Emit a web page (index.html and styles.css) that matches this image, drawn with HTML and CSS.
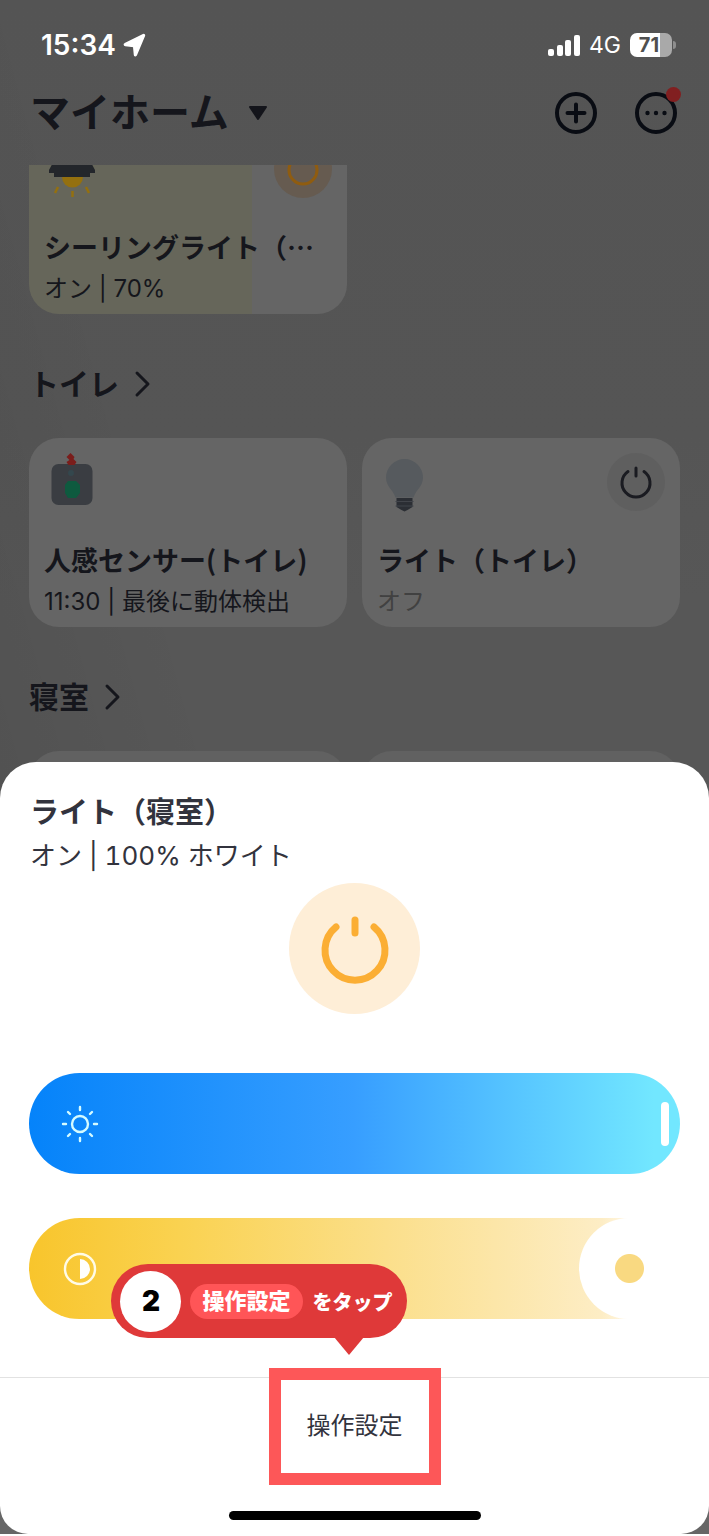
FILE: index.html
```html
<!DOCTYPE html>
<html lang="ja">
<head>
<meta charset="utf-8">
<meta name="viewport" content="width=device-width, initial-scale=1">
<title>マイホーム</title>
<link rel="stylesheet" href="styles.css">
</head>
<body>
<div class="screen">
  <div class="home">
    <div class="status-bar">
      <div class="status-left">
        <span class="clock">15:34</span>
        <svg class="location" viewBox="0 0 24 24" aria-hidden="true"><path d="M22.4 2.6 14.3 22c-.4 1-1.800.8-1.800-.3l-.8-8.200-8.400-1c-1.100-.1-1.300-1.400-.3-1.800L21.300 1.600c.7-.3 1.400.3 1.100 1z" fill="#fff" stroke="#fff" stroke-width="1.500" stroke-linejoin="round"/></svg>
      </div>
      <div class="status-right">
        <svg class="signal" viewBox="0 0 32 21" aria-hidden="true"><g fill="#fff"><rect x="0" y="14" width="6" height="7" rx="2"/><rect x="9" y="10" width="6" height="11" rx="2"/><rect x="17" y="5" width="6" height="16" rx="2"/><rect x="26" y="0" width="6" height="21" rx="2"/></g></svg>
        <span class="network">4G</span>
        <span class="battery"><span class="battery-level">71</span></span>
      </div>
    </div>

    <header class="header">
      <button class="home-switch" type="button">マイホーム
        <svg viewBox="0 0 20 16" aria-hidden="true"><path d="M2 2h16l-8 12z" fill="#14151b" stroke="#14151b" stroke-width="2" stroke-linejoin="round"/></svg>
      </button>
      <div class="header-actions">
        <button class="round-action" type="button" aria-label="追加">
          <svg viewBox="0 0 42 42" aria-hidden="true"><g fill="none" stroke="#090c13" stroke-width="4" stroke-linecap="round"><circle cx="21" cy="21" r="19"/><path d="M21 12.500v17M12.500 21h17"/></g></svg>
        </button>
        <button class="round-action" type="button" aria-label="メニュー">
          <svg viewBox="0 0 42 42" aria-hidden="true"><circle cx="21" cy="21" r="19" fill="none" stroke="#090c13" stroke-width="4"/><g fill="#090c13"><circle cx="12.500" cy="21" r="2.200"/><circle cx="21" cy="21" r="2.200"/><circle cx="29.500" cy="21" r="2.200"/></g></svg>
          <span class="badge"></span>
        </button>
      </div>
    </header>

    <main class="rooms">
      <div class="cards cards-scrolled">
        <article class="card card-on">
          <div class="card-top">
            <svg class="device" viewBox="0 0 56 60" aria-hidden="true"><path d="M19 4h18l14 26v3h-5v4H10v-4H5v-3z" fill="#23262b"/><path d="M18 37h21a10.500 10.500 0 0 1-21 0z" fill="#94700f"/><path d="m14 47-3 6M28.500 51v6M42 47l3 6" stroke="#94700f" stroke-width="2.500"/></svg>
            <button class="power power-on" type="button" aria-label="シーリングライトの電源"><svg viewBox="0 0 32 32" aria-hidden="true"><path d="M8 5.500a14 14 0 1 0 16 0M16 2v8"/></svg></button>
          </div>
          <h3 class="name">シーリングライト（…</h3>
          <p class="state">オン | 70%</p>
        </article>
      </div>

      <h2><button class="room" type="button">トイレ<svg viewBox="0 0 18 28" aria-hidden="true"><path d="m3 3 11 11L3 25"/></svg></button></h2>
      <div class="cards">
        <article class="card">
          <div class="card-top">
            <svg class="device" viewBox="0 0 56 60" aria-hidden="true"><rect x="7.500" y="11" width="41" height="41" rx="7" fill="#3a3d42"/><path d="m26.500 0 4 4-1 2 3 3-2 3h-6l-2-3 3-2-3-3z" fill="#7a1d1b"/><circle cx="27" cy="20" r="3" fill="#34474d"/><path d="M24 28h8l4 4v8l-4 5h-8l-3-5v-8z" fill="#0e5a3f"/></svg>
          </div>
          <h3 class="name">人感センサー(トイレ)</h3>
          <p class="state">11:30 | 最後に動体検出</p>
        </article>
        <article class="card">
          <div class="card-top">
            <svg class="device" viewBox="0 0 56 60" aria-hidden="true"><path d="M27.500 6A18.500 18.500 0 0 0 9 24.500c0 9 7 12 9.500 20h18c2.500-8 9.500-11 9.500-20A18.500 18.500 0 0 0 27.500 6z" fill="#565a5e"/><path d="M19.500 45h16v9l-5 3-3 1.500-3-1.500-5-3z" fill="#2b2e34"/><path d="M18.500 48.500h18M18.500 53h18" stroke="#41444a"/></svg>
            <button class="power" type="button" aria-label="ライト（トイレ）の電源"><svg viewBox="0 0 32 32" aria-hidden="true"><path d="M8 5.500a14 14 0 1 0 16 0M16 2v8"/></svg></button>
          </div>
          <h3 class="name">ライト（トイレ）</h3>
          <p class="state state-off">オフ</p>
        </article>
      </div>

      <h2><button class="room" type="button">寝室<svg viewBox="0 0 18 28" aria-hidden="true"><path d="m3 3 11 11L3 25"/></svg></button></h2>
      <div class="cards">
        <div class="card card-peek"></div>
        <div class="card card-peek"></div>
      </div>
    </main>
  </div>

  <section class="sheet" role="dialog" aria-labelledby="sheet-title">
    <h1 class="sheet-title" id="sheet-title">ライト（寝室）</h1>
    <p class="sheet-state">オン | 100% ホワイト</p>
    <button class="main-power" type="button" aria-label="電源">
      <svg viewBox="0 0 66 68" aria-hidden="true"><path d="M14 12A30 30 0 1 0 52 12M33 5v13"/></svg>
    </button>

    <div class="sliders">
      <label class="slider">
        <input class="range range-brightness" type="range" min="0" max="100" value="100" aria-label="明るさ">
        <svg class="slider-icon" viewBox="0 0 38 38" aria-hidden="true"><g fill="none" stroke="#d5fbff" stroke-width="2.400" stroke-linecap="round"><circle cx="19" cy="19" r="8"/><path d="M19 2v3M19 33v3M2 19h3M33 19h3M7 7l2 2M29 29l2 2M7 31l2-2M29 9l2-2"/></g></svg>
      </label>
      <label class="slider">
        <input class="range range-warmth" type="range" min="0" max="100" value="100" aria-label="色温度">
        <svg class="slider-icon" viewBox="0 0 38 38" aria-hidden="true"><circle cx="19" cy="19" r="15" fill="none" stroke="#fffbe6" stroke-width="2.400"/><path d="M19 9a10 10 0 0 1 0 20z" fill="#fff"/></svg>
      </label>
    </div>

    <footer class="sheet-footer">
      <div class="target">
        <button class="settings" type="button">操作設定</button>
        <span class="frame"></span>
        <div class="callout" role="note">
          <span class="step">2</span>
          <span class="chip">操作設定</span>
          <span class="callout-text">をタップ</span>
        </div>
      </div>
    </footer>
    <div class="home-indicator"></div>
  </section>
</div>
</body>
</html>
```

FILE: styles.css
```css
* {
  box-sizing: border-box;
}

body {
  margin: 0;
  background: #fff;
  font-family: Inter, "Noto Sans CJK JP", sans-serif;
  color: #15161c;
}

h1, h2, h3, p {
  margin: 0;
  font-weight: inherit;
}

button {
  margin: 0;
  padding: 0;
  border: 0;
  background: none;
  color: inherit;
  font: inherit;
}

svg {
  display: block;
  overflow: visible;
}

.screen {
  background: #666;
}

.home {
  background:
    linear-gradient(75deg, rgba(0, 0, 0, 0.06), rgba(0, 0, 0, 0) 25%),
    linear-gradient(#545454, #555 55%, #575757 75%);
}

.status-bar {
  display: flex;
  justify-content: space-between;
  align-items: center;
  height: 68px;
  padding: 22px 34px 0 41px;
  color: #fff;
}

.status-left,
.status-right {
  display: flex;
  align-items: center;
}

.status-left {
  gap: 6px;
}

.status-right {
  gap: 9px;
}

.clock {
  font-size: 28px;
  font-weight: 600;
}

.location {
  width: 24px;
  height: 24px;
}

.signal {
  width: 32px;
  height: 21px;
}

.network {
  font-size: 23px;
}

.battery {
  position: relative;
  width: 42px;
  height: 24px;
  margin-right: 3px;
  border-radius: 7px;
  background: linear-gradient(90deg, #fff 71%, #a9a9a9 71%);
  color: #4f4f4f;
  text-align: center;
}

.battery::after {
  content: "";
  position: absolute;
  top: 8px;
  right: -4px;
  width: 3px;
  height: 8px;
  border-radius: 0 3px 3px 0;
  background: #8e8e8e;
}

.battery-level {
  display: block;
  padding-right: 4px;
  font-size: 20px;
  font-weight: 700;
  line-height: 24px;
}

.header {
  display: flex;
  justify-content: space-between;
  align-items: center;
  height: 97px;
  padding: 0 32px 7px 30px;
}

.home-switch {
  display: flex;
  align-items: center;
  gap: 19px;
  font-size: 40px;
  font-weight: 600;
  line-height: 50px;
}

.home-switch svg {
  width: 20px;
  height: 16px;
}

.header-actions {
  display: flex;
  gap: 38px;
}

.round-action {
  position: relative;
}

.round-action svg {
  width: 42px;
  height: 42px;
}

.badge {
  position: absolute;
  top: -5px;
  right: -4px;
  width: 15px;
  height: 15px;
  border-radius: 50%;
  background: #811f20;
}

.rooms {
  padding: 0 29px;
}

.cards {
  display: grid;
  grid-template-columns: 1fr 1fr;
  gap: 15px;
}

.cards-scrolled {
  height: 149px;
  align-content: end;
  overflow: hidden;
}

.card {
  display: flex;
  flex-direction: column;
  min-width: 0;
  height: 189px;
  padding: 15px 15px 9px;
  border-radius: 30px;
  background: #656565;
}

.card-on {
  background: linear-gradient(90deg, #66665a 70%, #656565 70%);
}

.card-peek {
  height: 45px;
  border-radius: 30px 30px 0 0;
  background: #616161;
}

.card-top {
  display: flex;
  justify-content: space-between;
  flex: 1;
}

.device {
  width: 56px;
  height: 60px;
}

.power {
  display: grid;
  place-items: center;
  width: 58px;
  height: 58px;
  border-radius: 50%;
  background: #5f5f5f;
}

.power svg {
  width: 32px;
  height: 32px;
  fill: none;
  stroke: #1a1b21;
  stroke-width: 3;
  stroke-linecap: round;
}

.power-on {
  background: #665b50;
}

.power-on svg {
  stroke: #8f5c10;
}

.name {
  font-family: "Noto Sans CJK JP", sans-serif;
  font-size: 27px;
  font-weight: 600;
  line-height: 36px;
  white-space: nowrap;
}

.state {
  margin-top: 8px;
  font-size: 24px;
  line-height: 32px;
  white-space: nowrap;
}

.state-off {
  color: #414141;
}

.room {
  display: flex;
  align-items: center;
  gap: 15px;
  margin: 50px 0 34px;
  font-size: 30px;
  font-weight: 600;
  line-height: 40px;
}

.room svg {
  width: 18px;
  height: 28px;
  fill: none;
  stroke: #15161c;
  stroke-width: 3;
  stroke-linecap: round;
  stroke-linejoin: round;
}

.sheet {
  position: relative;
  margin-top: -34px;
  padding: 28px 0 14px;
  border-radius: 36px 36px 28px 28px;
  background: #fff;
  color: #32333d;
}

.sheet-title {
  padding: 0 30px;
  font-family: "Noto Sans CJK JP", sans-serif;
  font-size: 29px;
  font-weight: 600;
  line-height: 40px;
}

.sheet-state {
  margin-top: 8px;
  padding: 0 30px;
  font-size: 26px;
  font-variant-numeric: tabular-nums;
  line-height: 36px;
}

.main-power {
  display: grid;
  place-items: center;
  width: 131px;
  height: 131px;
  margin: 9px auto 59px;
  border-radius: 50%;
  background: #feeed7;
}

.main-power svg {
  width: 66px;
  height: 68px;
  fill: none;
  stroke: #fbae34;
  stroke-width: 7;
  stroke-linecap: round;
}

.sliders {
  display: grid;
  gap: 44px;
  padding: 0 29px 58px;
}

.slider {
  position: relative;
  display: block;
}

.slider-icon {
  position: absolute;
  top: 32px;
  left: 32px;
  width: 38px;
  height: 38px;
}

.range {
  display: block;
  width: 100%;
  height: 101px;
  margin: 0;
  border-radius: 51px;
  appearance: none;
}

.range-brightness {
  padding: 0 11px;
  background: linear-gradient(90deg, #0583fa, #379eff 50%, #72e7ff 96%);
}

.range-warmth {
  background: linear-gradient(90deg, #f8c52c, #fad250 23%, #fbdf8b 55%, #fdedc5 88%, #fff4db 91%, #fff 92%);
}

.range::-webkit-slider-thumb {
  appearance: none;
}

.range-brightness::-webkit-slider-thumb {
  width: 8px;
  height: 44px;
  border-radius: 4px;
  background: #fff;
}

.range-warmth::-webkit-slider-thumb {
  width: 101px;
  height: 101px;
  border-radius: 50%;
  background: radial-gradient(circle, #f9d981 14px, #fff 15px);
}

.sheet-footer {
  display: flex;
  justify-content: center;
  border-top: 1px solid #e2e2e2;
}

.target {
  position: relative;
}

.settings {
  padding: 0 26px;
  font-size: 24px;
  line-height: 96px;
}

.frame {
  position: absolute;
  inset: -10px -12px -11px;
  border: 12px solid #fd5758;
  pointer-events: none;
}

.callout {
  position: absolute;
  right: 22px;
  bottom: 136px;
  display: flex;
  align-items: center;
  height: 74px;
  padding: 0 14px 0 9px;
  border-radius: 37px;
  background: #df3939;
  color: #fff;
  font-weight: 900;
  white-space: nowrap;
}

.callout::after {
  content: "";
  position: absolute;
  top: 73px;
  right: 43px;
  border: solid transparent;
  border-width: 18px 15px 0;
  border-top-color: #df3939;
}

.step {
  width: 61px;
  height: 61px;
  border-radius: 50%;
  background: #fff;
  color: #000;
  font-size: 28px;
  line-height: 61px;
  text-align: center;
}

.chip {
  margin: 0 10px 0 9px;
  padding: 0 12px;
  border-radius: 18px;
  background: #ff5557;
  font-size: 22px;
  line-height: 35px;
}

.callout-text {
  font-size: 20px;
}

.home-indicator {
  width: 252px;
  height: 9px;
  margin: 37px auto 0;
  border-radius: 5px;
  background: #000;
}
```
